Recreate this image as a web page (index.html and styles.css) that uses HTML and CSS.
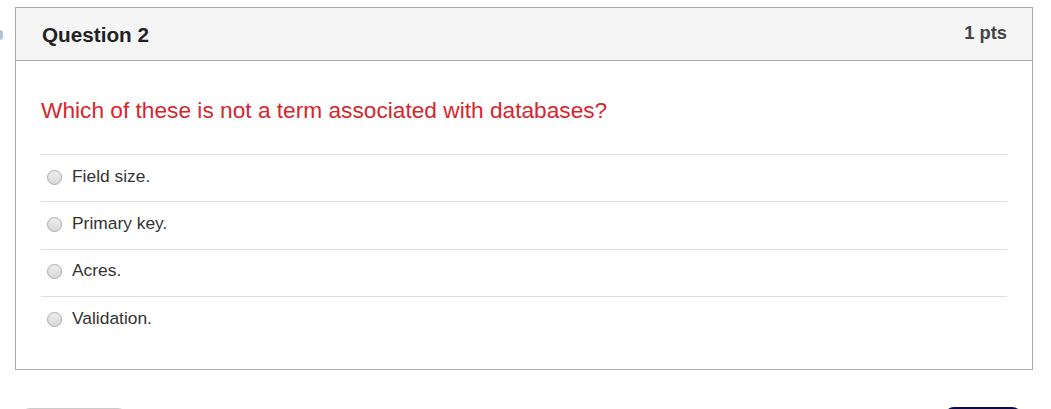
FILE: index.html
```html
<!DOCTYPE html>
<html>
<head>
<meta charset="utf-8">
<link rel="stylesheet" href="styles.css">
</head>
<body>
<div class="page">
  <span class="nav-arrow"></span>
  <div class="question">
    <div class="q-header">
      <span class="q-title">Question 2</span>
      <span class="q-pts">1 pts</span>
    </div>
    <div class="q-body">
      <div class="q-text">Which of these is not a term associated with databases?</div>
      <div class="answers">
        <label class="answer"><span class="radio"></span><span>Field size.</span></label>
        <label class="answer"><span class="radio"></span><span>Primary key.</span></label>
        <label class="answer"><span class="radio"></span><span>Acres.</span></label>
        <label class="answer"><span class="radio"></span><span>Validation.</span></label>
      </div>
    </div>
  </div>
  <div class="footer">
    <span class="btn btn-light"></span>
    <span class="btn btn-dark"></span>
  </div>
</div>
</body>
</html>
```

FILE: styles.css
```css
html, body {
  margin: 0;
  padding: 0;
  background: #fff;
  overflow: hidden;
}
body {
  font-family: "Liberation Sans", Arial, sans-serif;
  color: #333;
  width: 1051px;
  height: 409px;
}
.page {
  position: relative;
  height: 409px;
  overflow: hidden;
  padding: 7px 0 0 15px;
  box-sizing: border-box;
}
.nav-arrow {
  position: absolute;
  left: -4px;
  top: 30px;
  width: 7px;
  height: 10px;
  background: #a9c4dc;
  border-radius: 3px;
}
.question {
  width: 1016px;
  border: 1px solid #aaa;
  background: #fff;
}
.q-header {
  display: flex;
  justify-content: space-between;
  align-items: flex-start;
  height: 52px;
  background: #f5f5f5;
  border-bottom: 1px solid #aaa;
  padding: 0 25px 0 26px;
}
.q-title {
  font-weight: bold;
  font-size: 20.7px;
  color: #222;
  margin-top: 15px;
}
.q-pts {
  font-weight: bold;
  font-size: 18.3px;
  color: #444;
  margin-top: 14px;
}
.q-body {
  padding: 37px 25px 25px 25px;
}
.q-text {
  color: #d5262c;
  font-size: 22.7px;
  line-height: 24px;
  margin-bottom: 32px;
}
.answers {
  display: flex;
  flex-direction: column;
}
.answer {
  display: flex;
  align-items: center;
  height: 46.4px;
  box-sizing: content-box;
  border-top: 1px solid #ddd;
  font-size: 17.4px;
  color: #333;
  padding: 0 0 0 6px;
}
.answer > span:last-child {
  position: relative;
  top: -2px;
}
.radio {
  width: 13px;
  height: 13px;
  border-radius: 50%;
  border: 1px solid #aaa;
  background: linear-gradient(#eee, #d8d8d8);
  margin-right: 10px;
  margin-bottom: 2px;
  flex: none;
}
.footer {
  display: flex;
  justify-content: space-between;
  margin-top: 37px;
  padding: 0 29px 0 5px;
}
.btn {
  display: block;
  height: 20px;
  border-radius: 10px 10px 0 0;
}
.btn-light {
  width: 106px;
  border: 1px solid #ccc;
  background: #f5f5f5;
  margin-top: 1px;
}
.btn-dark {
  width: 78px;
  background: #0b0b52;
}
```
